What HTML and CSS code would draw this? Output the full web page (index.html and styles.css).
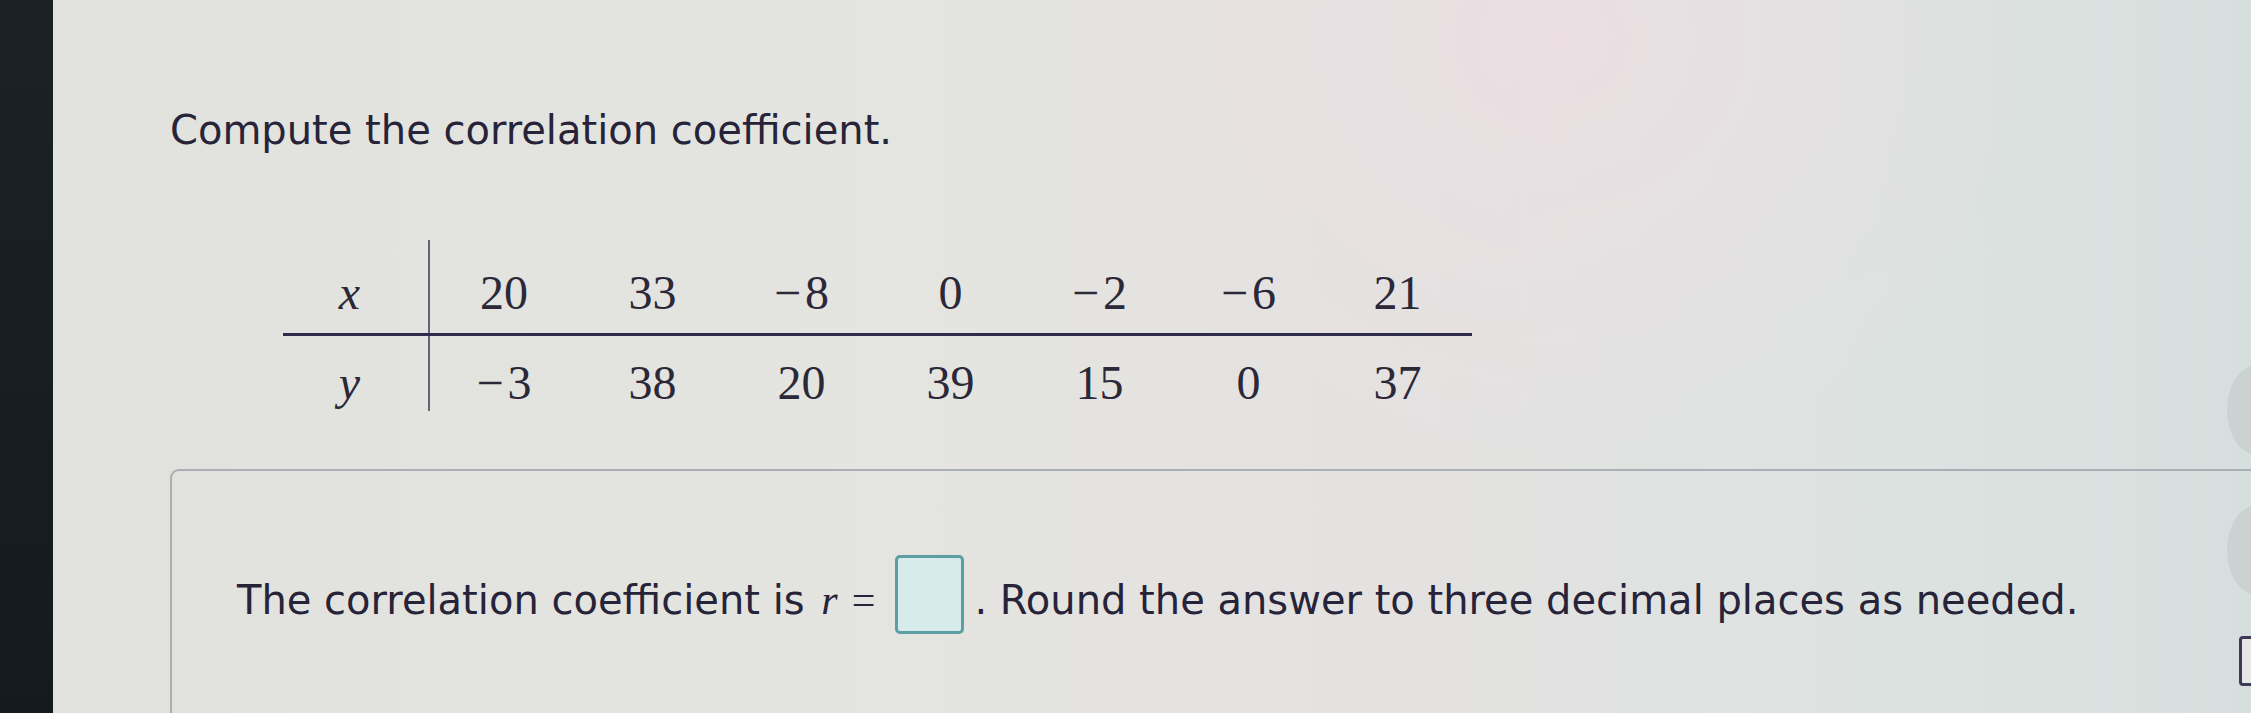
FILE: index.html
```html
<!DOCTYPE html>
<html lang="en">
<head>
<meta charset="utf-8">
<title>Compute the correlation coefficient</title>
<link rel="stylesheet" href="styles.css">
</head>
<body>
<div class="screen">
  <div class="bezel"></div>
  <main class="main">
    <h1 class="title">Compute the correlation coefficient.</h1>
    <table class="data">
      <tr class="row-x">
        <th class="label"><i>x</i></th>
        <td>20</td><td>33</td><td>&minus;&#8202;8</td><td>0</td><td>&minus;&#8202;2</td><td>&minus;&#8202;6</td><td>21</td>
      </tr>
      <tr class="row-y">
        <th class="label"><i>y</i></th>
        <td>&minus;&#8202;3</td><td>38</td><td>20</td><td>39</td><td>15</td><td>0</td><td>37</td>
      </tr>
    </table>
    <section class="panel">
      <p class="answer">The correlation coefficient is <i class="var">r</i><span class="eq">=</span><span class="input"></span>. Round the answer to three decimal places as needed.</p>
    </section>
  </main>
  <div class="edge-circle c1"></div>
  <div class="edge-circle c2"></div>
  <div class="edge-box"></div>
</div>
</body>
</html>
```

FILE: styles.css
```css
html, body {
  margin: 0;
  padding: 0;
  width: 2251px;
  height: 713px;
  overflow: hidden;
}

.screen {
  position: relative;
  display: flex;
  width: 2251px;
  height: 713px;
  overflow: hidden;
  background:
    radial-gradient(ellipse 480px 420px at 1560px 40px, rgba(236, 222, 226, 0.85), rgba(236, 222, 226, 0) 100%),
    linear-gradient(90deg, #e1e2de 0%, #e4e4e0 40%, #e4e2e1 62%, #dee3e1 80%, #d7dfde 100%);
  font-family: "DejaVu Sans", Verdana, sans-serif;
  color: #27243a;
}

.bezel {
  flex: 0 0 53px;
  background: linear-gradient(180deg, #1b2227 0%, #141b20 100%);
}

.main {
  flex: 1 1 auto;
  padding-left: 117px;
  min-width: 0;
}

.title {
  margin: 107px 0 0 0;
  font-size: 40px;
  line-height: 46px;
  font-weight: normal;
}

.data {
  margin: 87px 0 0 113px;
  border-collapse: collapse;
  font-family: "Liberation Serif", "Times New Roman", serif;
  font-size: 48px;
  color: #2b2838;
}

.data th,
.data td {
  padding: 0;
  width: 149px;
  text-align: center;
  font-weight: normal;
}

.data .label {
  width: 146px;
  border-right: 2px solid #6b6078;
  padding-right: 12px;
}

.row-x th,
.row-x td {
  height: 94px;
  border-bottom: 3px solid #2e2b4c;
  padding-top: 12px;
  box-sizing: border-box;
}

.row-y th,
.row-y td {
  height: 77px;
  padding-top: 18px;
  box-sizing: border-box;
}

.data .label i {
  font-style: italic;
}

.panel {
  margin-top: 58px;
  margin-right: -40px;
  height: 400px;
  border: 2px solid #a9afb4;
  border-right: 0;
  border-radius: 9px 0 0 0;
  padding: 84px 0 0 65px;
  box-sizing: border-box;
}

.answer {
  margin: 0;
  font-size: 40px;
  line-height: 46px;
  white-space: nowrap;
}

.var {
  font-family: "Liberation Serif", "Times New Roman", serif;
  font-size: 42px;
  margin-left: 4px;
}

.eq {
  font-family: "Liberation Serif", "Times New Roman", serif;
  font-size: 42px;
  margin-left: 14px;
}

.input {
  display: inline-block;
  width: 63px;
  height: 73px;
  margin: 0 10px 0 20px;
  border: 3px solid #5b9ea3;
  border-radius: 5px;
  background: #d6ebea;
  vertical-align: -20px;
}

.edge-circle {
  position: absolute;
  width: 60px;
  height: 90px;
  border-radius: 50%;
  background: rgba(180, 186, 186, 0.35);
  right: -36px;
}

.c1 { top: 365px; }
.c2 { top: 505px; }

.edge-box {
  position: absolute;
  right: -20px;
  top: 636px;
  width: 26px;
  height: 44px;
  border: 3px solid #3c3a55;
  border-radius: 4px;
  background: #e6e8e6;
}
```
